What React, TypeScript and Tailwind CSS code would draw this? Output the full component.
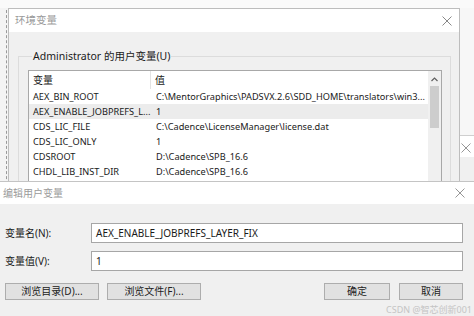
const font = "font-['Noto_Sans','Noto_Sans_CJK_SC',sans-serif]";

const rows = [
  { name: 'AEX_BIN_ROOT', value: 'C:\\MentorGraphics\\PADSVX.2.6\\SDD_HOME\\translators\\win3...' },
  { name: 'AEX_ENABLE_JOBPREFS_L...', value: '1', selected: true },
  { name: 'CDS_LIC_FILE', value: 'C:\\Cadence\\LicenseManager\\license.dat' },
  { name: 'CDS_LIC_ONLY', value: '1' },
  { name: 'CDSROOT', value: 'D:\\Cadence\\SPB_16.6' },
  { name: 'CHDL_LIB_INST_DIR', value: 'D:\\Cadence\\SPB_16.6' },
];

function CloseIcon({ color = '#7a7a7a' }: { color?: string }) {
  return (
    <svg width="10" height="10" viewBox="0 0 10 10">
      <path d="M0.5 0.5 L9.5 9.5 M9.5 0.5 L0.5 9.5" stroke={color} strokeWidth="0.9" fill="none" />
    </svg>
  );
}

function WinButton({ label, className }: { label: string; className: string }) {
  return (
    <div
      className={`h-[17px] border border-[#adadad] bg-[#e1e1e1] flex items-center justify-center text-[10px] text-[#222] ${className}`}
    >
      {label}
    </div>
  );
}

export default function App() {
  return (
    <div className={`relative w-[474px] h-[316px] overflow-hidden bg-[#f4f4f4] ${font}`}>
      {/* desktop strips behind */}
      <div className="absolute left-0 top-0 w-[474px] h-[8px] bg-[#fafafa]" />
      <div className="absolute left-[6px] top-[10px] h-[300px] border-l border-dashed border-[#9a9a9a]" />

      {/* window behind on the right */}
      <div className="absolute left-[460px] top-[8px] w-[14px] h-[128px] bg-[#f7f7f7]" />
      <div className="absolute left-[460px] top-[135px] w-[14px] h-[50px] border-t border-[#cfcfcf] bg-white">
        <div className="pl-[1px] pt-[7px]">
          <CloseIcon color="#8a8a8a" />
        </div>
        <div className="mt-[4px] h-[30px] bg-[#f0f0f0]" />
      </div>

      {/* 环境变量 window */}
      <div className="absolute left-[8px] top-[8px] w-[452px] h-[308px] border border-[#bdbdbd] bg-[#f0f0f0] flex flex-col">
        <div className="h-[23px] bg-white flex items-center justify-between pl-[6px] pr-[7px]">
          <span className="text-[10.5px] text-[#9a9a9a]">环境变量</span>
          <CloseIcon />
        </div>
        <fieldset className="mt-[17px] ml-[9px] mr-[8px] border border-[#dcdcdc] pl-[9px] pr-[8px] pb-2 flex-1 min-w-0">
          <legend className="ml-[4px] px-[1px] text-[10.5px] text-[#1a1a1a] leading-[15px]">
            Administrator 的用户变量(U)
          </legend>
          <div className="mt-[6px] h-[200px] border border-[#a8a8a8] bg-white flex text-[9.2px] text-[#1a1a1a]">
            <div className="flex-1 min-w-0 flex flex-col overflow-hidden">
              <div className="h-[18px] flex items-center text-[10px]">
                <div className="w-[122px] shrink-0 h-full pl-[4px] flex items-center border-r border-[#e3e3e3]">变量</div>
                <div className="pl-[4px]">值</div>
              </div>
              {rows.map((r) => (
                <div
                  key={r.name}
                  className={`h-[15px] flex items-center whitespace-nowrap ${r.selected ? 'bg-[#ececec]' : ''}`}
                >
                  <div className="w-[122px] shrink-0 pl-[4px] overflow-hidden">{r.name}</div>
                  <div className="pl-[5px]">{r.value}</div>
                </div>
              ))}
            </div>
            <div className="w-[13px] shrink-0 bg-[#f0f0f0] flex flex-col items-center">
              <svg width="9" height="9" viewBox="0 0 9 9" className="mt-[4px]">
                <path d="M1.5 6 L4.5 3 L7.5 6" stroke="#606060" strokeWidth="1.2" fill="none" />
              </svg>
              <div className="mt-[2px] w-[9px] h-[42px] bg-[#cdcdcd]" />
            </div>
          </div>
        </fieldset>
      </div>

      {/* 编辑用户变量 dialog */}
      <div className="absolute left-0 top-[181px] w-[474px] h-[135px] border-t border-[#c4c4c4] bg-[#f0f0f0] flex flex-col">
        <div className="h-[22px] bg-white flex items-center justify-between pl-[3px] pr-[9px]">
          <span className="text-[10px] text-[#9a9a9a]">编辑用户变量</span>
          <CloseIcon color="#8a8a8a" />
        </div>
        <div className="pl-[5px] pr-[11px] pt-[19px] flex flex-col gap-[8px] text-[10px] text-[#1a1a1a]">
          <div className="flex items-center">
            <span className="w-[86px]">变量名(N):</span>
            <div className="flex-1 h-[20px] border border-[#a6a6a6] bg-white flex items-center pl-[4px]">
              AEX_ENABLE_JOBPREFS_LAYER_FIX
            </div>
          </div>
          <div className="flex items-center">
            <span className="w-[86px]">变量值(V):</span>
            <div className="flex-1 h-[20px] border border-[#a6a6a6] bg-white flex items-center pl-[4px]">1</div>
          </div>
          <div className="mt-[4px] flex items-center">
            <WinButton label="浏览目录(D)..." className="w-[94px]" />
            <WinButton label="浏览文件(F)..." className="w-[94px] ml-[8px]" />
            <WinButton label="确定" className="w-[66px] ml-auto" />
            <WinButton label="取消" className="w-[64px] ml-[9px]" />
          </div>
        </div>
        <div className="mt-auto mb-[1px] flex justify-end pr-[2px]">
          <span className="text-[9px] text-[#c4c4c4] leading-[11px]">CSDN @智芯创新001</span>
        </div>
      </div>
    </div>
  );
}
